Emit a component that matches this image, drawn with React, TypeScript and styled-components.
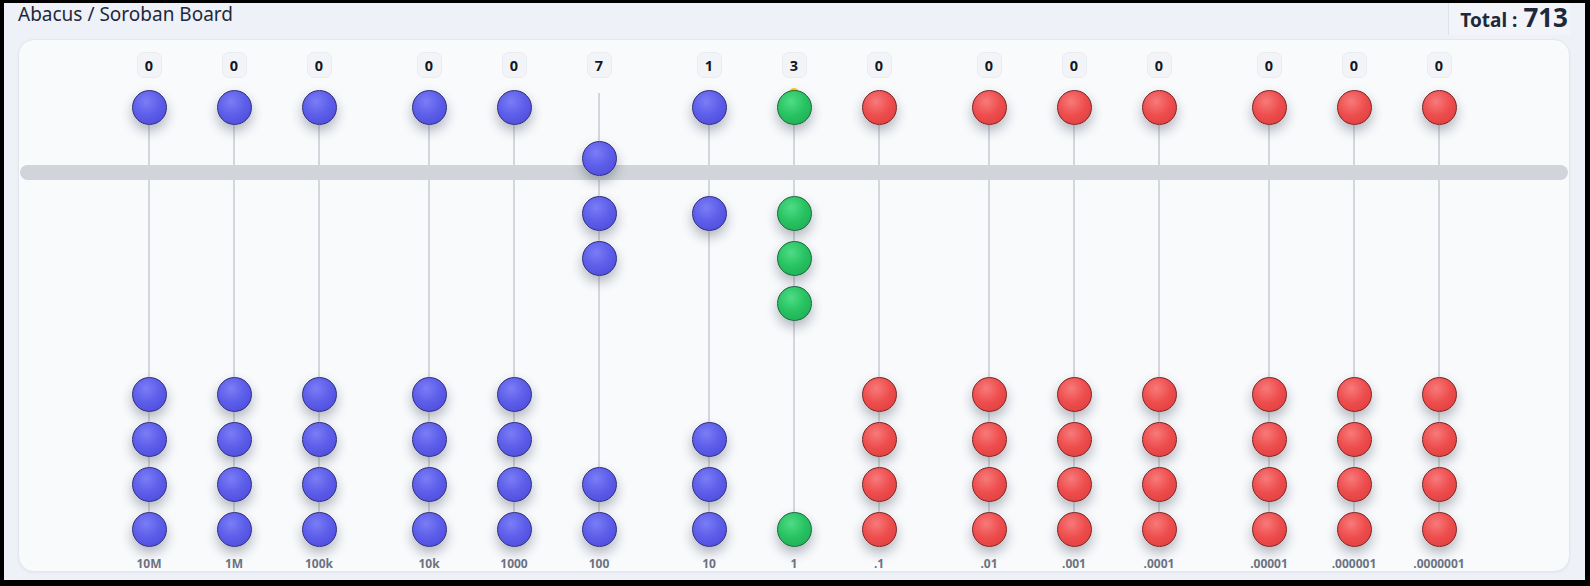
import React, { useState } from 'react';
import styled, { createGlobalStyle } from 'styled-components';

type Tone = 'blue' | 'green' | 'red';

const PLACES = [
  '10M', '1M', '100k', '10k', '1000', '100', '10', '1',
  '.1', '.01', '.001', '.0001', '.00001', '.000001', '.0000001',
];
const UNIT = 7;
const START = [0, 0, 0, 0, 0, 7, 1, 3, 0, 0, 0, 0, 0, 0, 0];

const tones: Record<Tone, { light: string; base: string; dark: string; edge: string }> = {
  blue: { light: '#7a7df6', base: '#5c5de9', dark: '#4a48d8', edge: '#2c2a78' },
  green: { light: '#4fdc86', base: '#27c261', dark: '#1ea853', edge: '#176238' },
  red: { light: '#f77a7a', base: '#ee4d4d', dark: '#db3b3b', edge: '#7a1f1f' },
};

const toneOf = (i: number): Tone => (i < UNIT ? 'blue' : i === UNIT ? 'green' : 'red');

const GlobalStyle = createGlobalStyle`
  body {
    margin: 0;
    background: #000;
    font-family: "Noto Sans", "Open Sans", sans-serif;
  }
`;

const Frame = styled.div`
  box-sizing: border-box;
  height: 586px;
  border: solid #000;
  border-width: 3px 5px 6px 4px;
  background: #eef1f8;
  padding: 0 15px 8px 14px;
  display: flex;
  flex-direction: column;
`;

const Header = styled.div`
  height: 36px;
  display: flex;
  justify-content: space-between;
  align-items: flex-start;
`;

const Title = styled.h1`
  margin: 0;
  font-size: 19px;
  line-height: 22px;
  font-weight: 400;
  color: #1e293b;
`;

const TotalBox = styled.div`
  height: 32px;
  border-left: 1px solid #dde2ea;
  background: #f2f4fa;
  padding: 0 2px 0 11px;
  display: flex;
  align-items: baseline;
  gap: 6px;
  color: #1e293b;
  font-weight: 700;
`;

const TotalLabel = styled.span`
  font-size: 19px;
  line-height: 28px;
`;

const TotalValue = styled.span`
  font-size: 26px;
  line-height: 28px;
`;

const Board = styled.div`
  box-sizing: border-box;
  height: 533px;
  background: #f8fafc;
  border: 1px solid #e3e8ef;
  border-radius: 16px;
  box-shadow: 0 1px 3px rgba(15, 23, 42, 0.05);
  padding-top: 12px;
  display: flex;
  flex-direction: column;
`;

const Row = styled.div<{ $lift?: boolean }>`
  display: flex;
  justify-content: center;
  gap: 25px;
  position: relative;
  z-index: ${(p) => (p.$lift ? 2 : 0)};
`;

const Group = styled.div`
  display: flex;
`;

const LabelCell = styled.div`
  width: 85px;
  display: flex;
  justify-content: center;
`;

const Digit = styled.span`
  box-sizing: border-box;
  min-width: 25px;
  height: 26px;
  border-radius: 7px;
  background: #f2f4f7;
  border: 1px solid #e9ecf1;
  display: flex;
  align-items: center;
  justify-content: center;
  font-size: 14.5px;
  font-weight: 700;
  color: #111827;
`;

const HeavenCell = styled.div<{ $down: boolean }>`
  box-sizing: border-box;
  width: 85px;
  height: 89px;
  margin-top: 9px;
  padding-top: 3px;
  position: relative;
  display: flex;
  flex-direction: column;
  align-items: center;
  justify-content: ${(p) => (p.$down ? 'flex-end' : 'flex-start')};

  &::before {
    content: '';
    position: absolute;
    left: 50%;
    top: 6px;
    bottom: 11px;
    width: 2px;
    margin-left: -1px;
    background: #d3d7dd;
  }
`;

const Marker = styled.span`
  position: absolute;
  top: 1px;
  left: 50%;
  width: 10px;
  height: 10px;
  margin-left: -5px;
  border-radius: 50%;
  background: #facc15;
  z-index: 1;
`;

const Beam = styled.div`
  height: 15px;
  margin: -11px 1px 0;
  border-radius: 8px;
  background: #d1d5db;
  position: relative;
  z-index: 1;
`;

const EarthCell = styled.div`
  box-sizing: border-box;
  width: 85px;
  height: 372px;
  padding: 16px 0 5px;
  position: relative;
  display: flex;
  flex-direction: column;
  align-items: center;
  justify-content: space-between;

  &::before {
    content: '';
    position: absolute;
    left: 50%;
    top: 0;
    bottom: 20px;
    width: 2px;
    margin-left: -1px;
    background: #d3d7dd;
  }
`;

const Stack = styled.div`
  display: flex;
  flex-direction: column;
  gap: 10px;
`;

const Bead = styled.button<{ $tone: Tone }>`
  box-sizing: border-box;
  width: 35px;
  height: 35px;
  padding: 0;
  border-radius: 50%;
  border: 1px solid ${(p) => tones[p.$tone].edge};
  background: radial-gradient(
    circle at 40% 32%,
    ${(p) => tones[p.$tone].light} 0%,
    ${(p) => tones[p.$tone].base} 48%,
    ${(p) => tones[p.$tone].dark} 100%
  );
  box-shadow: 0 6px 12px rgba(30, 41, 59, 0.32);
  position: relative;
  z-index: 2;
  cursor: pointer;
`;

const NameCell = styled.div`
  width: 85px;
  margin-top: 5px;
  text-align: center;
  font-size: 12px;
  line-height: 14px;
  font-weight: 700;
  color: #6b7280;
`;

const groups = [0, 3, 6, 9, 12].map((s) => [s, s + 1, s + 2]);

const formatTotal = (digits: number[]) => {
  const total = digits.reduce((sum, d, i) => sum + d * Math.pow(10, UNIT - i), 0);
  return String(Number(total.toFixed(7)));
};

const App = () => {
  const [digits, setDigits] = useState<number[]>(START);

  const setDigit = (i: number, v: number) => {
    setDigits((prev) => prev.map((d, k) => (k === i ? v : d)));
  };

  return (
    <>
      <GlobalStyle />
      <Frame>
        <Header>
          <Title>Abacus / Soroban Board</Title>
          <TotalBox>
            <TotalLabel>Total :</TotalLabel>
            <TotalValue>{formatTotal(digits)}</TotalValue>
          </TotalBox>
        </Header>
        <Board>
          <Row>
            {groups.map((g, gi) => (
              <Group key={gi}>
                {g.map((i) => (
                  <LabelCell key={i}>
                    <Digit>{digits[i]}</Digit>
                  </LabelCell>
                ))}
              </Group>
            ))}
          </Row>

          <Row $lift>
            {groups.map((g, gi) => (
              <Group key={gi}>
                {g.map((i) => {
                  const down = digits[i] >= 5;
                  return (
                    <HeavenCell key={i} $down={down}>
                      {i === UNIT && <Marker />}
                      <Bead
                        $tone={toneOf(i)}
                        aria-label={`${PLACES[i]} five`}
                        onClick={() => setDigit(i, down ? digits[i] - 5 : digits[i] + 5)}
                      />
                    </HeavenCell>
                  );
                })}
              </Group>
            ))}
          </Row>

          <Beam />

          <Row>
            {groups.map((g, gi) => (
              <Group key={gi}>
                {g.map((i) => {
                  const five = digits[i] >= 5 ? 5 : 0;
                  const ones = digits[i] - five;
                  return (
                    <EarthCell key={i}>
                      <Stack>
                        {Array.from({ length: ones }, (_, k) => (
                          <Bead
                            key={k}
                            $tone={toneOf(i)}
                            aria-label={`${PLACES[i]} one`}
                            onClick={() => setDigit(i, five + k)}
                          />
                        ))}
                      </Stack>
                      <Stack>
                        {Array.from({ length: 4 - ones }, (_, k) => (
                          <Bead
                            key={k}
                            $tone={toneOf(i)}
                            aria-label={`${PLACES[i]} one`}
                            onClick={() => setDigit(i, five + ones + k + 1)}
                          />
                        ))}
                      </Stack>
                    </EarthCell>
                  );
                })}
              </Group>
            ))}
          </Row>

          <Row>
            {groups.map((g, gi) => (
              <Group key={gi}>
                {g.map((i) => (
                  <NameCell key={i}>{PLACES[i]}</NameCell>
                ))}
              </Group>
            ))}
          </Row>
        </Board>
      </Frame>
    </>
  );
};

export default App;
